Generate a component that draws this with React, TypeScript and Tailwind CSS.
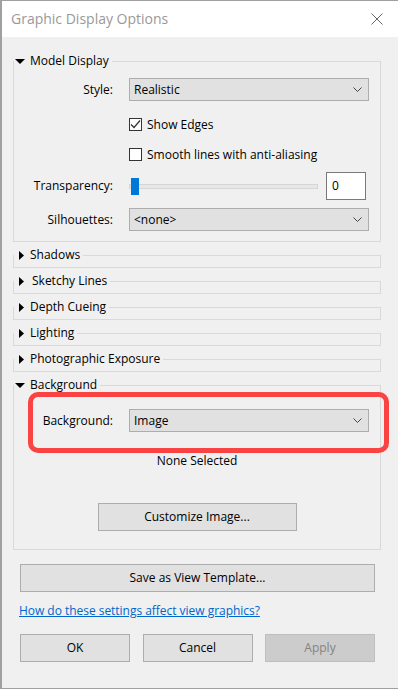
import React from 'react';

const Chevron: React.FC = () => (
  <svg width="9" height="5" viewBox="0 0 9 5" className="mr-[6px]">
    <polyline points="0.5,0.5 4.5,4.5 8.5,0.5" fill="none" stroke="#444" strokeWidth="1" />
  </svg>
);

const Dropdown: React.FC<{ value: string }> = ({ value }) => (
  <div className="flex h-[23px] w-[240px] items-center justify-between border border-[#adadad] bg-[#e1e1e1] pl-[4px] text-black">
    <span>{value}</span>
    <Chevron />
  </div>
);

const Checkbox: React.FC<{ checked?: boolean; label: string }> = ({ checked, label }) => (
  <div className="flex h-[13px] items-center pl-[115px]">
    <div className="relative h-[13px] w-[13px] border border-[#333] bg-white">
      {checked && (
        <svg width="11" height="11" viewBox="0 0 11 11" className="absolute left-0 top-0">
          <polyline points="1,5.5 4,8.5 10,1.5" fill="none" stroke="#333" strokeWidth="1.2" />
        </svg>
      )}
    </div>
    <span className="ml-[5px]">{label}</span>
  </div>
);

const Label: React.FC<{ text: string }> = ({ text }) => (
  <div className="w-[100px] shrink-0 pr-[1px] text-right">{text}</div>
);

const Legend: React.FC<{ title: string; open?: boolean; shift?: boolean }> = ({ title, open, shift }) => (
  <legend className="flex h-[16px] items-center pr-[3px]">
    <span className="flex w-[16px] items-center">
      {open ? (
        <svg width="10" height="5" viewBox="0 0 10 5" className="ml-[1px]">
          <polygon points="0,0 10,0 5,5" fill="#000" />
        </svg>
      ) : (
        <svg width="5" height="9" viewBox="0 0 5 9" className="ml-[5px]">
          <polygon points="0,0 5,4.5 0,9" fill="#000" />
        </svg>
      )}
    </span>
    <span className={shift ? 'ml-[2px]' : ''}>{title}</span>
  </legend>
);

const Collapsed: React.FC<{ title: string; shift?: boolean }> = ({ title, shift }) => (
  <fieldset className="mt-[5px] border border-[#d9d9d9] pb-[4px]">
    <Legend title={title} shift={shift} />
  </fieldset>
);

const Button: React.FC<{ text: string; className?: string; disabled?: boolean }> = ({ text, className, disabled }) => (
  <div
    className={
      'flex h-[28px] items-center justify-center border ' +
      (disabled ? 'border-[#bfbfbf] bg-[#cccccc] text-[#838383] ' : 'border-[#adadad] bg-[#e1e1e1] text-black ') +
      (className ?? '')
    }
  >
    {text}
  </div>
);

export default function App() {
  return (
    <div className="flex h-[689px] w-[398px] flex-col border-l-2 border-t border-b border-[#a0a0a0] bg-[#f0f0f0] font-['Open_Sans',sans-serif] text-[12px] leading-[16px] text-black">
      {/* title bar */}
      <div className="flex h-[36px] shrink-0 items-center justify-between bg-white pl-[9px] pr-[15px]">
        <span className="text-[14px] text-[#999999]">Graphic Display Options</span>
        <svg width="12" height="12" viewBox="0 0 12 12">
          <path d="M0.5 0.5 L11.5 11.5 M11.5 0.5 L0.5 11.5" stroke="#666" strokeWidth="1" />
        </svg>
      </div>

      <div className="flex flex-col pl-[11px] pr-[17px] pt-[16px]">
        {/* Model Display */}
        <fieldset className="border border-[#d9d9d9] pb-[10px]">
          <Legend title="Model Display" open />
          <div className="mt-[9px] flex items-center">
            <Label text="Style:" />
            <div className="ml-[15px]">
              <Dropdown value="Realistic" />
            </div>
          </div>
          <div className="mt-[17px]">
            <Checkbox checked label="Show Edges" />
          </div>
          <div className="mt-[17px]">
            <Checkbox label="Smooth lines with anti-aliasing" />
          </div>
          <div className="mt-[11px] flex h-[28px] items-center">
            <Label text="Transparency:" />
            <div className="relative ml-[15px] flex h-[17px] w-[189px] items-center">
              <div className="h-[5px] w-full border border-[#d6d6d6] bg-[#e7e7e7]" />
              <div className="absolute left-[2px] top-0 h-[17px] w-[8px] bg-[#0078d7]" />
            </div>
            <div className="ml-[8px] flex h-[28px] w-[40px] items-center border border-[#7a7a7a] bg-white pl-[5px]">0</div>
          </div>
          <div className="mt-[8px] flex items-center">
            <Label text="Silhouettes:" />
            <div className="ml-[15px]">
              <Dropdown value="<none>" />
            </div>
          </div>
        </fieldset>

        <Collapsed title="Shadows" />
        <Collapsed title="Sketchy Lines" shift />
        <Collapsed title="Depth Cueing" />
        <Collapsed title="Lighting" />
        <Collapsed title="Photographic Exposure" />

        {/* Background */}
        <fieldset className="mt-[5px] border border-[#d9d9d9] pb-[18px]">
          <Legend title="Background" open />
          <div className="relative mt-[16px] flex items-center">
            <Label text="Background:" />
            <div className="ml-[15px]">
              <Dropdown value="Image" />
            </div>
            <div className="pointer-events-none absolute left-[14px] top-[-17px] h-[61px] w-[361px] rounded-[10px] border-[5px] border-[#fa4343]" />
          </div>
          <div className="mt-[21px] text-center">None Selected</div>
          <Button text="Customize Image..." className="mx-auto mt-[34px] w-[199px]" />
        </fieldset>

        <Button text="Save as View Template..." className="ml-[7px] mt-[14px] w-[355px]" />
        <a className="ml-[6px] mt-[11px] self-start text-[12px] tracking-[-0.03px] text-[#0066cc] underline">How do these settings affect view graphics?</a>
        <div className="ml-[7px] mt-[15px] flex w-[355px] justify-between">
          <Button text="OK" className="w-[110px]" />
          <Button text="Cancel" className="w-[110px]" />
          <Button text="Apply" className="w-[110px]" disabled />
        </div>
      </div>
    </div>
  );
}
